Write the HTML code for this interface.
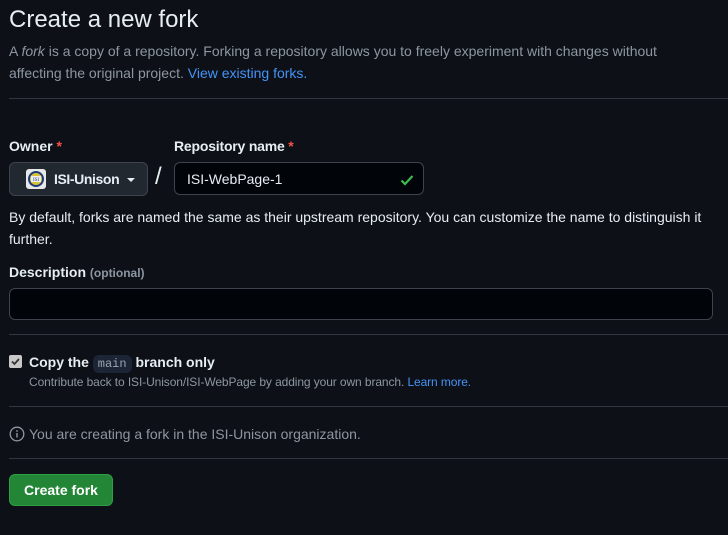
<!DOCTYPE html>
<html><head><meta charset="utf-8"><style>
*{box-sizing:border-box;margin:0;padding:0}
body{width:728px;height:535px;background:#0d1117;color:#e6edf3;font-family:"Liberation Sans",sans-serif;font-size:14px;overflow:hidden;position:relative}
.a{position:absolute}
.muted{color:#8d96a0}
a{color:#4493f8;text-decoration:none}
.hr{position:absolute;left:9px;right:0;height:1px;background:#30363d}
.lbl{font-weight:bold;font-size:14px}
.req{color:#f85149}
</style></head><body>
<div class="a" style="left:9px;top:6px;font-size:24px;">Create a new fork</div>
<div class="a muted" style="left:9px;top:40px;width:700px;line-height:22px;">A <i>fork</i> is a copy of a repository. Forking a repository allows you to freely experiment with changes without affecting the original project. <a>View existing forks.</a></div>
<div class="hr" style="top:98px"></div>
<div class="a lbl" style="left:9px;top:138px">Owner <span class="req">*</span></div>
<div class="a lbl" style="left:174px;top:138px;letter-spacing:-0.2px">Repository name <span class="req">*</span></div>
<div class="a" style="left:9px;top:162px;width:139px;height:34px;background:#212830;border:1px solid #3d444d;border-radius:6px;">
 <svg class="a" style="left:16px;top:6px" width="20" height="20" viewBox="0 0 20 20"><rect width="20" height="20" rx="3" fill="#e8e8e8"/><circle cx="10" cy="10" r="8" fill="#1f3c7a"/><circle cx="10" cy="10" r="6" fill="#d8c23a"/><rect x="5" y="7" width="10" height="6" fill="#eee"/><text x="10" y="12" font-size="5" text-anchor="middle" fill="#1f3c7a" font-family="Liberation Serif">ISI</text></svg>
 <div class="a" style="left:44px;top:8px;font-weight:bold;letter-spacing:-0.4px">ISI-Unison</div>
 <div class="a" style="left:117px;top:15px;width:0;height:0;border-left:4px solid transparent;border-right:4px solid transparent;border-top:4px solid #e6edf3"></div>
</div>
<div class="a" style="left:155px;top:163px;font-size:24px;color:#e6edf3">/</div>
<div class="a" style="left:174px;top:162px;width:250px;height:33px;background:#010409;border:1px solid #3d444d;border-radius:6px;">
 <div class="a" style="left:12px;top:8px">ISI-WebPage-1</div>
 <svg class="a" style="left:224px;top:9px" width="16" height="16" viewBox="0 0 16 16"><path d="M2.5 8.5l3.5 3.5 7.5-8" stroke="#3fb950" stroke-width="2.2" fill="none"/></svg>
</div>
<div class="a" style="left:9px;top:206px;width:710px;line-height:22px;color:#e6edf3">By default, forks are named the same as their upstream repository. You can customize the name to distinguish it further.</div>
<div class="a lbl" style="left:9px;top:264px">Description <span class="muted" style="font-size:12px">(optional)</span></div>
<div class="a" style="left:9px;top:288px;width:704px;height:32px;background:#010409;border:1px solid #3d444d;border-radius:6px;"></div>
<div class="hr" style="top:334px"></div>
<div class="a" style="left:9px;top:355px;width:13px;height:13px;background:#c8c8c8;border-radius:2px"><svg width="13" height="13" viewBox="0 0 13 13"><path d="M3 6.5l2.5 2.5 4.5-5" stroke="#333" stroke-width="1.8" fill="none"/></svg></div>
<div class="a lbl" style="left:29px;top:354px">Copy the <span style="font-family:'Liberation Mono',monospace;font-weight:normal;font-size:12px;background:#1b2535;color:#9aa4af;padding:2px 5px;border-radius:6px">main</span> branch only</div>
<div class="a muted" style="left:29px;top:375px;font-size:12px;letter-spacing:-0.1px">Contribute back to ISI-Unison/ISI-WebPage by adding your own branch. <a>Learn more.</a></div>
<div class="hr" style="top:406px"></div>
<svg class="a" style="left:9px;top:426px" width="16" height="16" viewBox="0 0 16 16"><circle cx="8" cy="8" r="6.8" stroke="#8d96a0" stroke-width="1.3" fill="none"/><rect x="7.3" y="7" width="1.4" height="4.5" fill="#8d96a0"/><circle cx="8" cy="5" r="0.9" fill="#8d96a0"/></svg>
<div class="a muted" style="left:29px;top:426px">You are creating a fork in the ISI-Unison organization.</div>
<div class="hr" style="top:458px"></div>
<div class="a" style="left:9px;top:474px;width:104px;height:32px;background:#238636;border:1px solid #2ea043;border-radius:6px;color:#fff;font-weight:bold;text-align:center;line-height:30px">Create fork</div>
</body></html>
